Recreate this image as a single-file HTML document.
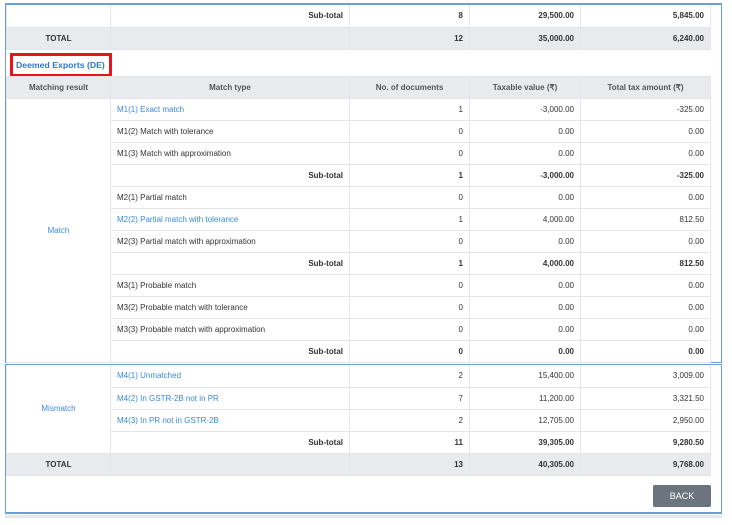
<!DOCTYPE html>
<html><head><meta charset="utf-8"><style>
*{margin:0;padding:0;box-sizing:border-box}
body{width:732px;height:525px;background:#fff;font-family:"Liberation Sans",Arial,sans-serif;font-size:8px;color:#333;position:relative;overflow:hidden}
.box{position:absolute;left:5px;width:717px;border:1px solid #6a9fd6}
table{border-collapse:collapse;table-layout:fixed;width:704px;position:absolute;left:0}
td{height:22px;border:1px solid #e4e6ea;padding:0 6px;white-space:nowrap;overflow:hidden}
td.r{text-align:right}td.c{text-align:center}
.b{font-weight:bold}
.l{color:#3b8ae0}
.g td{background:#e8eaed}
.h td{background:#e8eaed;color:#555;text-align:center;font-weight:bold}
</style></head><body>
<div class="box" style="top:3px;height:360px;border-top-width:2px">
<table style="top:0">
<colgroup><col style="width:104px"><col style="width:239px"><col style="width:120px"><col style="width:111px"><col style="width:130px"></colgroup>
<tr><td style="border-top:none"></td><td class="r b" style="border-top:none">Sub-total</td><td class="r b" style="border-top:none">8</td><td class="r b" style="border-top:none">29,500.00</td><td class="r b" style="border-top:none">5,845.00</td></tr>
<tr class="g"><td class="c b">TOTAL</td><td></td><td class="r b">12</td><td class="r b">35,000.00</td><td class="r b">6,240.00</td></tr>
</table>
<div style="position:absolute;left:4px;top:48px;width:102px;height:24px;border:3px solid #e8141b;color:#2a78d8;font-weight:bold;font-size:8.7px;line-height:18px;padding-left:3px;white-space:nowrap">Deemed Exports (DE)</div>
<table style="top:71px">
<colgroup><col style="width:104px"><col style="width:239px"><col style="width:120px"><col style="width:111px"><col style="width:130px"></colgroup>
<tr class="h"><td>Matching result</td><td>Match type</td><td>No. of documents</td><td>Taxable value (₹)</td><td>Total tax amount (₹)</td></tr>
<tr><td rowspan="12" class="c l">Match</td><td class="l">M1(1) Exact match</td><td class="r">1</td><td class="r">-3,000.00</td><td class="r">-325.00</td></tr>
<tr><td>M1(2) Match with tolerance</td><td class="r">0</td><td class="r">0.00</td><td class="r">0.00</td></tr>
<tr><td>M1(3) Match with approximation</td><td class="r">0</td><td class="r">0.00</td><td class="r">0.00</td></tr>
<tr><td class="r b">Sub-total</td><td class="r b">1</td><td class="r b">-3,000.00</td><td class="r b">-325.00</td></tr>
<tr><td>M2(1) Partial match</td><td class="r">0</td><td class="r">0.00</td><td class="r">0.00</td></tr>
<tr><td class="l">M2(2) Partial match with tolerance</td><td class="r">1</td><td class="r">4,000.00</td><td class="r">812.50</td></tr>
<tr><td>M2(3) Partial match with approximation</td><td class="r">0</td><td class="r">0.00</td><td class="r">0.00</td></tr>
<tr><td class="r b">Sub-total</td><td class="r b">1</td><td class="r b">4,000.00</td><td class="r b">812.50</td></tr>
<tr><td>M3(1) Probable match</td><td class="r">0</td><td class="r">0.00</td><td class="r">0.00</td></tr>
<tr><td>M3(2) Probable match with tolerance</td><td class="r">0</td><td class="r">0.00</td><td class="r">0.00</td></tr>
<tr><td>M3(3) Probable match with approximation</td><td class="r">0</td><td class="r">0.00</td><td class="r">0.00</td></tr>
<tr><td class="r b">Sub-total</td><td class="r b">0</td><td class="r b">0.00</td><td class="r b">0.00</td></tr>
</table>
</div>
<div class="box" style="top:364px;height:150px;border-bottom:2px solid #6a9fd6">
<table style="top:0">
<colgroup><col style="width:104px"><col style="width:239px"><col style="width:120px"><col style="width:111px"><col style="width:130px"></colgroup>
<tr><td rowspan="4" class="c l" style="border-top:none">Mismatch</td><td class="l" style="border-top:none">M4(1) Unmatched</td><td class="r" style="border-top:none">2</td><td class="r" style="border-top:none">15,400.00</td><td class="r" style="border-top:none">3,009.00</td></tr>
<tr><td class="l">M4(2) In GSTR-2B not in PR</td><td class="r">7</td><td class="r">11,200.00</td><td class="r">3,321.50</td></tr>
<tr><td class="l">M4(3) In PR not in GSTR-2B</td><td class="r">2</td><td class="r">12,705.00</td><td class="r">2,950.00</td></tr>
<tr><td class="r b">Sub-total</td><td class="r b">11</td><td class="r b">39,305.00</td><td class="r b">9,280.50</td></tr>
<tr class="g"><td class="c b">TOTAL</td><td></td><td class="r b">13</td><td class="r b">40,305.00</td><td class="r b">9,768.00</td></tr>
</table>
<div style="position:absolute;left:647px;top:120px;width:58px;height:22px;background:#6c757d;color:#fff;border-radius:2px;text-align:center;line-height:22px;font-size:9px">BACK</div>
</div>
<div style="position:absolute;left:5px;top:515px;width:717px;height:3px;background:#e4e6ea"></div>
</body></html>
